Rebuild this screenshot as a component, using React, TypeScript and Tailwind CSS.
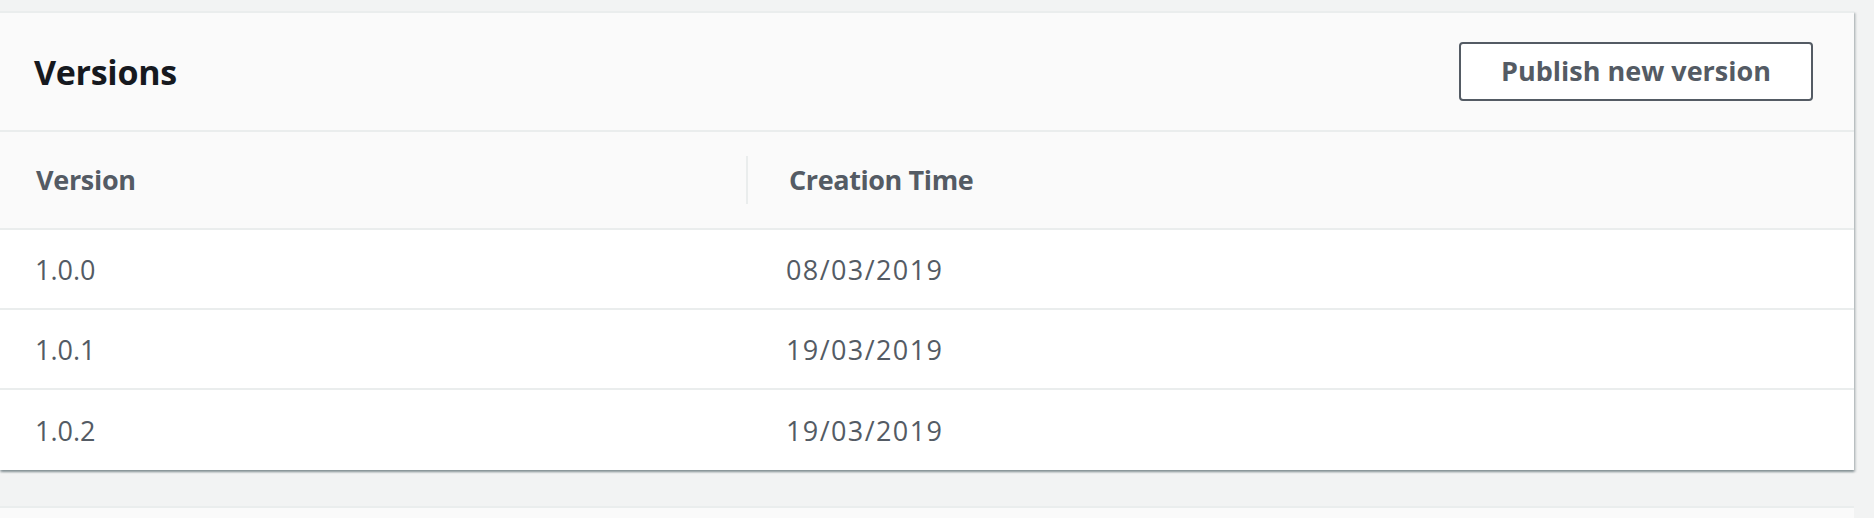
const rows = [
  { version: "1.0.0", created: "08/03/2019" },
  { version: "1.0.1", created: "19/03/2019" },
  { version: "1.0.2", created: "19/03/2019" },
];

export default function App() {
  return (
    <div
      className="w-full h-[518px] overflow-hidden bg-[#f2f3f3] pt-[11px]"
      style={{ fontFamily: '"Open Sans", "Noto Sans", sans-serif' }}
    >
      <div className="w-[1854px] bg-white border-t-2 border-[#eaeded] shadow-[0_2px_2px_0_rgba(0,28,36,0.35),2px_2px_2px_0_rgba(0,28,36,0.15)]">
        {/* panel header */}
        <div className="h-[119px] bg-[#fafafa] border-b-2 border-[#eaeded] flex items-center justify-between pl-[34px] pr-[41px]">
          <h2 className="text-[34px] font-bold text-[#16191f] tracking-[-0.3px] mt-[2px]">
            Versions
          </h2>
          <button className="w-[354px] h-[59px] border-2 border-[#545b64] rounded-[4px] bg-white text-[27px] font-bold text-[#545b64] tracking-[0px]">
            Publish new version
          </button>
        </div>

        {/* table header */}
        <div className="h-[98px] bg-[#fafafa] border-b-2 border-[#eaeded] flex items-center text-[27px] font-bold text-[#545b64]">
          <div className="w-[746px] pl-[36px] tracking-[-0.3px]">Version</div>
          <div className="w-[2px] h-[48px] bg-[#eaeded]" />
          <div className="pl-[41px] tracking-[-0.4px]">Creation Time</div>
        </div>

        {/* rows */}
        {rows.map((r, i) => (
          <div
            key={r.version}
            className={
              "h-[80px] flex items-center text-[27px] text-[#545b64] " +
              (i < rows.length - 1 ? "border-b-2 border-[#eaeded]" : "")
            }
          >
            <div className="w-[748px] pl-[35px] mt-[2px]">{r.version}</div>
            <div className="pl-[38px] mt-[2px] tracking-[1.4px]">{r.created}</div>
          </div>
        ))}
      </div>

      {/* next panel peeking in */}
      <div className="mt-[36px] w-[1854px] h-[40px] bg-[#fafafa] border-t-2 border-[#eaeded]" />
    </div>
  );
}
